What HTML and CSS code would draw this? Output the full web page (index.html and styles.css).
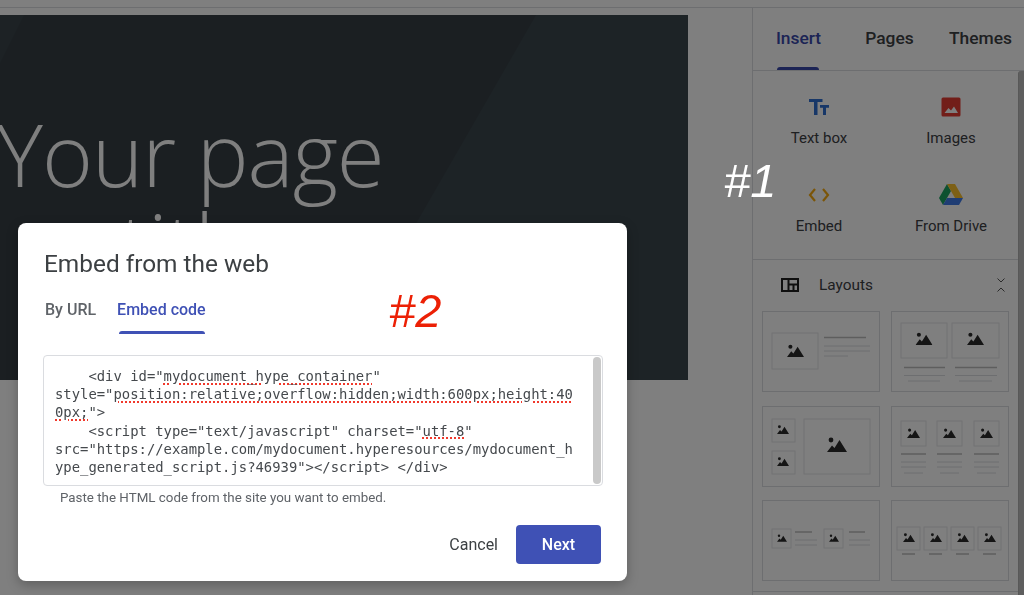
FILE: index.html
```html
<!DOCTYPE html>
<html lang="en">
<head>
<meta charset="utf-8">
<title>Embed from the web</title>
<link rel="stylesheet" href="styles.css">
</head>
<body>
<svg class="defs" width="0" height="0" aria-hidden="true">
  <symbol id="mt" viewBox="0 0 20 15"><circle cx="4" cy="3" r="2.4"/><path d="M0 15 5 8.5 7.5 11 12.5 3 20 15Z"/></symbol>
</svg>
<div class="app">
  <div class="topstrip"></div>
  <div class="main">
    <div class="canvas">
      <section class="hero">
        <h1 class="hero-title">Your page<br>title</h1>
      </section>
    </div>
    <aside class="panel">
      <nav class="tabs">
        <div class="tab tab-active">Insert</div>
        <div class="tab">Pages</div>
        <div class="tab">Themes</div>
      </nav>
      <div class="panel-body">
        <div class="panel-content">
          <div class="inserts">
            <div class="insert">
              <svg class="ico" width="24" height="24" viewBox="0 0 24 24"><path fill="#2f6fd0" d="M2 4H15.5V7H10.5V20H7V7H2ZM13 10H22V12.8H19V20H16V12.8H13Z"/></svg>
              <span>Text box</span>
            </div>
            <div class="insert">
              <svg class="ico" width="24" height="24" viewBox="0 0 24 24"><rect x="2.5" y="2.5" width="19" height="19" rx="1.5" fill="#e53d32"/><path fill="#fff" d="M5.5 18 9.5 13 12 15.5 15 11.5 19 18Z"/></svg>
              <span>Images</span>
            </div>
            <div class="insert">
              <svg class="ico" width="24" height="24" viewBox="0 0 24 24"><path fill="none" stroke="#f6ab10" stroke-width="2.2" d="M8 6 3 12 8 18M16 6 21 12 16 18"/></svg>
              <span>Embed</span>
            </div>
            <div class="insert">
              <svg class="ico" width="24" height="24" viewBox="0 0 24 22"><path fill="#1aa260" d="M8 0 0 14 4 21 12 7Z"/><path fill="#fbc02d" d="M8 0H16L24 14H16Z"/><path fill="#3f7be8" d="M4 21H20L24 14H8Z"/></svg>
              <span>From Drive</span>
            </div>
          </div>
          <div class="layouts-head">
            <svg class="lay-ico" width="18" height="14" viewBox="0 0 18 14"><path fill="none" stroke="#1f1f1f" stroke-width="2" d="M1 1H17V13H1ZM7.5 1V13M7.5 6.5H17M12.5 6.5V13"/></svg>
            <span class="lay-label">Layouts</span>
            <svg class="chev" width="8" height="14" viewBox="0 0 8 14"><path fill="none" stroke="#555" stroke-width="1" d="M.5 .5 4 4 7.5 .5M.5 13.5 4 10 7.5 13.5"/></svg>
          </div>
          <div class="cards">
            <svg class="card" viewBox="0 0 118 81">
              <rect class="box" x="10" y="22" width="46" height="36"/><use href="#mt" x="25" y="33" width="17" height="13"/>
              <path class="thick" d="M62 26.5H104"/><path class="thin" d="M62 35H108M62 40H108M62 45H86"/>
            </svg>
            <svg class="card" viewBox="0 0 118 81">
              <rect class="box" x="10" y="12" width="46" height="35"/><rect class="box" x="61" y="12" width="47" height="35"/>
              <use href="#mt" x="24.500" y="21" width="17" height="13"/><use href="#mt" x="76" y="21" width="17" height="13"/>
              <path class="thick" d="M13 56.500H54M64 56.500H106"/><path class="thin" d="M13 64.500H54M64 64.500H106M17 70H49M68 70H101"/>
            </svg>
            <svg class="card" viewBox="0 0 118 81">
              <rect class="box" x="10" y="13" width="23" height="23"/><rect class="box" x="10" y="45" width="23" height="23"/><rect class="box" x="42" y="13" width="66" height="55"/>
              <use href="#mt" x="15" y="19" width="12" height="9"/><use href="#mt" x="15" y="51" width="12" height="9"/><use href="#mt" x="65" y="31" width="20" height="15"/>
            </svg>
            <svg class="card" viewBox="0 0 118 81">
              <rect class="box" x="10" y="15" width="25" height="25"/><rect class="box" x="46" y="15" width="25" height="25"/><rect class="box" x="83" y="15" width="25" height="25"/>
              <use href="#mt" x="16" y="22" width="13" height="10"/><use href="#mt" x="52" y="22" width="13" height="10"/><use href="#mt" x="89" y="22" width="13" height="10"/>
              <path class="thick" d="M10 48H35M46 48H71M83 48H108"/><path class="thin" d="M10 56H35M46 56H71M83 56H108M10 61H35M46 61H71M83 61H108M13 67H32M49 67H68M86 67H105"/>
            </svg>
            <svg class="card" viewBox="0 0 118 81">
              <rect class="box" x="10" y="29" width="19" height="19"/><rect class="box" x="62" y="29" width="19" height="19"/>
              <use href="#mt" x="15" y="34" width="10" height="8"/><use href="#mt" x="67" y="34" width="10" height="8"/>
              <path class="thick" d="M33 32H50M87 32H103"/><path class="thin" d="M33 40H55M87 40H108M33 45H55M87 45H108"/>
            </svg>
            <svg class="card" viewBox="0 0 118 81">
              <rect class="box" x="6" y="27" width="23" height="23"/><rect class="box" x="33" y="27" width="23" height="23"/><rect class="box" x="60" y="27" width="23" height="23"/><rect class="box" x="87" y="27" width="23" height="23"/>
              <use href="#mt" x="12" y="33" width="12" height="9"/><use href="#mt" x="39" y="33" width="12" height="9"/><use href="#mt" x="66" y="33" width="12" height="9"/><use href="#mt" x="93" y="33" width="12" height="9"/>
              <path class="thick" d="M11 54H24M38 54H51M65 54H78M92 54H105"/>
            </svg>
          </div>
        </div>
        <div class="scrollbar"></div>
      </div>
    </aside>
  </div>
</div>
<div class="scrim"></div>
<div class="note note-one">#1</div>
<div class="dialog">
  <h2 class="dlg-title">Embed from the web</h2>
  <div class="dlg-tabs">
    <span class="dlg-tab">By URL</span>
    <span class="dlg-tab dlg-tab-active">Embed code</span>
  </div>
  <div class="code-box">
    <pre class="code">    &lt;div id="<span class="sp">mydocument_hype_container</span>"
style="<span class="sp">position:relative;overflow:hidden;width:600px;height:40</span>
<span class="sp">0px;</span>"&gt;
    &lt;script type="text/javascript" charset="<span class="sp">utf-8</span>"
src="https://example.com/mydocument.hyperesources/mydocument_h
ype_generated_script.js?46939"&gt;&lt;/script&gt; &lt;/div&gt;</pre>
    <div class="code-scroll"></div>
  </div>
  <p class="hint">Paste the HTML code from the site you want to embed.</p>
  <div class="actions">
    <span class="cancel">Cancel</span>
    <span class="next">Next</span>
  </div>
  <div class="note note-two">#2</div>
</div>
</body>
</html>
```

FILE: styles.css
```css
* { box-sizing: border-box; }
html, body { margin: 0; height: 100%; overflow: hidden; }
body { font-family: Roboto, "Noto Sans", sans-serif; color: #3c4043; background: #fff; }
.defs { position: absolute; }
.app { height: 595px; display: flex; flex-direction: column; }
.topstrip { height: 8px; border-bottom: 1px solid #dadce0; flex: none; }
.main { flex: 1; display: flex; min-height: 0; }
.canvas { width: 752px; flex: none; padding-top: 7px; }
.hero { position: relative; isolation: isolate; width: 688px; height: 365px; background: #363f45; overflow: hidden; }
.hero::before { content: ""; position: absolute; inset: 0; background: #3b464c; clip-path: polygon(536px 0, 688px 0, 688px 365px, 326px 365px); }
.hero::after { content: ""; position: absolute; inset: 0; background: #3b454b; clip-path: polygon(0 0, 24px 0, 0 48px); }
.hero-title { position: relative; z-index: 1; margin: 93px 0 0 -3px; width: 386px; font: 300 87px/90px "Open Sans", sans-serif; letter-spacing: -1px; color: #fff; text-align: center; white-space: nowrap; }

.panel { flex: 1; border-left: 1px solid #dadce0; display: flex; flex-direction: column; min-width: 0; }
.tabs { height: 63px; flex: none; display: flex; border-bottom: 1px solid #dadce0; }
.tab { position: relative; width: 91px; flex: none; font: 500 17.400px/60px Roboto, sans-serif; text-align: center; color: #3c4043; }
.tab-active { color: #3949ab; }
.tab-active::after { content: ""; position: absolute; left: 24px; right: 25px; bottom: 0; height: 3px; border-radius: 3px 3px 0 0; background: #3949ab; }
.panel-body { flex: 1; display: flex; min-height: 0; }
.panel-content { flex: 1; min-width: 0; }
.scrollbar { width: 6px; flex: none; background: #bdbdbd; border-radius: 3px 0 0 0; border-left: 1px solid #b0b0b0; }
.inserts { display: grid; grid-template-columns: 132px 132px; row-gap: 24px; padding: 24px 0 12px; border-bottom: 1px solid #dadce0; }
.insert { height: 64px; display: flex; flex-direction: column; align-items: center; font-size: 15px; line-height: 20px; }
.ico { flex: none; margin-bottom: 9px; }
.layouts-head { height: 50px; display: flex; align-items: center; padding-left: 28px; font-size: 15.400px; }
.lay-ico { flex: none; }
.lay-label { margin-left: 20px; flex: 1; }
.chev { flex: none; margin-right: 13px; }
.cards { display: grid; grid-template-columns: 118px 118px; column-gap: 11px; row-gap: 13.500px; padding: 1px 0 10px 9px; border-bottom: 1px solid #dadce0; }
.card { display: block; width: 118px; height: 81px; box-shadow: inset 0 0 0 1px #dadce0; fill: #2b2b2b; }
.box { fill: none; stroke: #e3e4e6; stroke-width: 1; }
.thick { stroke: #bdbdbd; stroke-width: 1.500; fill: none; }
.thin { stroke: #dadce0; stroke-width: 1; fill: none; }

.scrim { position: fixed; inset: 0; z-index: 2; background: rgba(0, 0, 0, .5); }
.note { position: absolute; z-index: 3; font: italic 400 47px/1 "Liberation Sans", sans-serif; }
.note-one { left: 724px; top: 157px; color: #fff; }
.note-two { left: 371px; top: 64px; color: #ec2005; }

.dialog { position: absolute; z-index: 3; left: 18px; top: 223px; width: 609px; height: 358px; padding: 26px 25px 0; background: #fff; border-radius: 8px; box-shadow: 0 4px 12px rgba(0, 0, 0, .25); }
.dlg-title { margin: 0 0 0 1px; font: 400 24.400px/30px Roboto, sans-serif; color: #3c4043; }
.dlg-tabs { display: flex; gap: 21px; margin: 19px 0 0 2px; height: 36px; }
.dlg-tab { position: relative; height: 36px; font: 500 16px/24px Roboto, sans-serif; color: #5f6368; }
.dlg-tab-active { color: #3f51b5; }
.dlg-tab-active::after { content: ""; position: absolute; left: 2px; right: 1px; bottom: 0; height: 3px; border-radius: 3px 3px 0 0; background: #3f51b5; }
.code-box { position: relative; margin-top: 21px; height: 131px; width: 560px; border: 1px solid #dadce0; border-radius: 4px; padding: 11px 0 0 11px; }
.code { margin: 0; font: 400 13.880px/18.200px "DejaVu Sans Mono", monospace; color: #45494d; }
.sp { text-decoration: underline dotted #f0392c 2px; text-underline-offset: 2px; }
.code-scroll { position: absolute; top: 1px; right: 1px; bottom: 1px; width: 8px; border-radius: 4px; background: #c9c9c9; }
.hint { margin: 4px 0 0 17px; font-size: 13.350px; line-height: 16px; color: #5f6368; }
.actions { display: flex; justify-content: flex-end; align-items: center; margin-top: 19px; padding-right: 1px; }
.cancel { font: 400 16px/20px Roboto, sans-serif; color: #3c4043; margin-right: 18px; }
.next { width: 85px; height: 39px; border-radius: 4px; background: #3f51b5; color: #fff; font: 500 16px/39px Roboto, sans-serif; text-align: center; }
```
